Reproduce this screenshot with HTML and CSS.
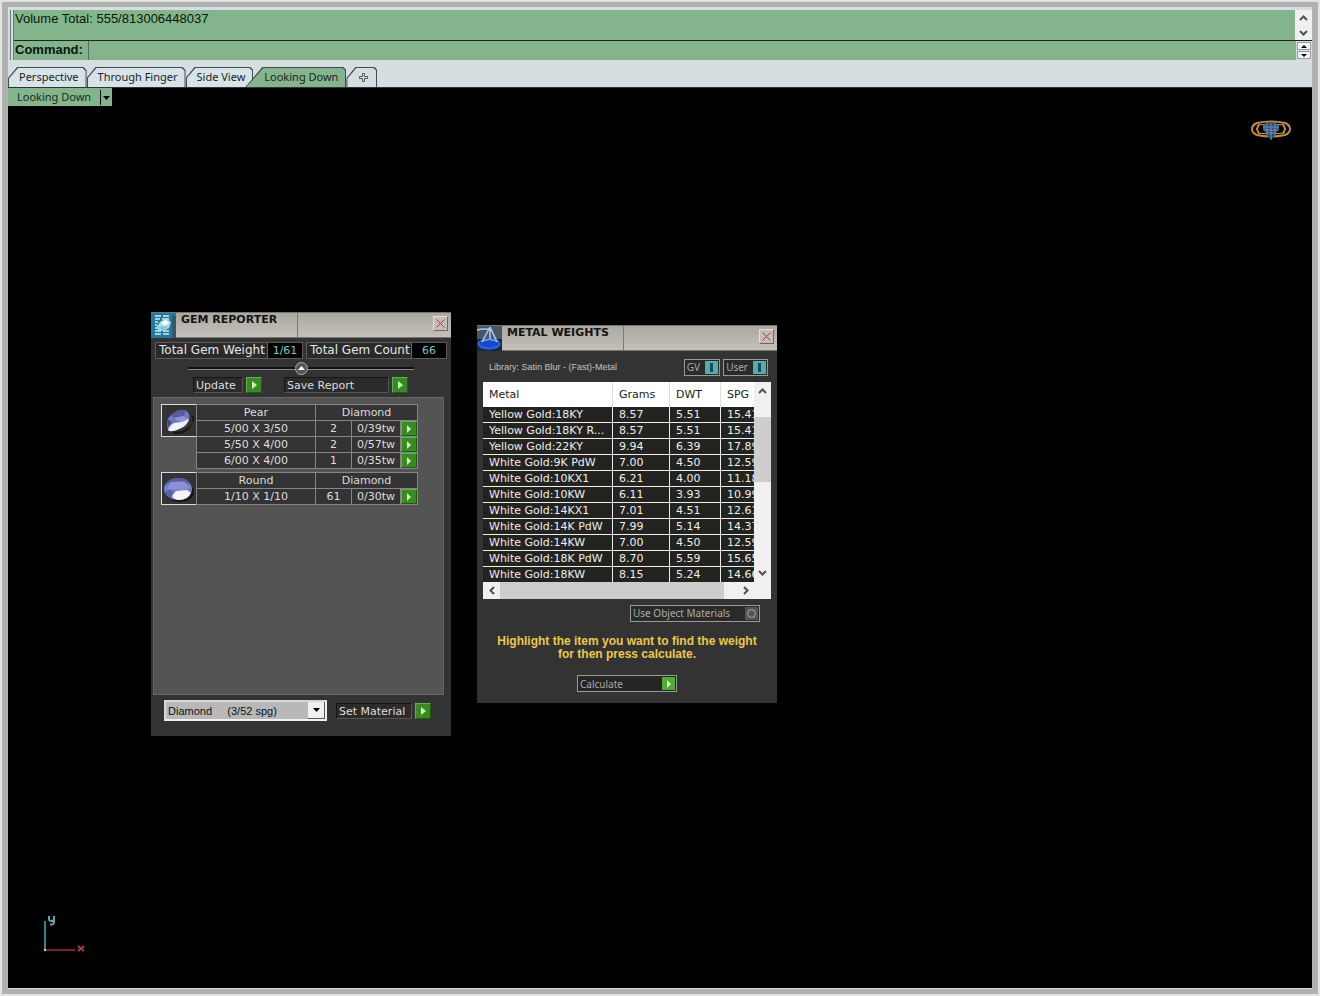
FILE: index.html
```html
<!DOCTYPE html>
<html lang="en">
<head>
    <meta charset="utf-8">
    <title>Looking Down</title>
    <link rel="stylesheet" href="styles.css">
</head>
<body>
    <div class="frame">
        <div class="console">
            <div class="grip"></div>
            <div class="console-main">
                <div class="history">
                    <div class="history-text">Volume Total: 555/813006448037</div>
                    <div class="history-scroll">
                        <button class="chev" aria-label="Scroll up"><svg width="9" height="6"><path d="M1 5L4.500 1.500L8 5"/></svg></button>
                        <button class="chev" aria-label="Scroll down"><svg width="9" height="6"><path d="M1 1L4.500 4.500L8 1"/></svg></button>
                    </div>
                </div>
                <div class="prompt">
                    <label for="command">Command:</label>
                    <input type="text" id="command">
                    <div class="spin">
                        <button aria-label="Previous"><svg width="6" height="3"><path d="M0 3L3 0L6 3Z"/></svg></button>
                        <button aria-label="Next"><svg width="6" height="3"><path d="M0 0L3 3L6 0Z"/></svg></button>
                    </div>
                </div>
            </div>
        </div>

        <div class="tabs">
            <button class="tab">Perspective</button>
            <button class="tab">Through Finger</button>
            <button class="tab">Side View</button>
            <button class="tab active">Looking Down</button>
            <button class="tab add" aria-label="New view"><svg width="9" height="9"><path d="M3.500 .5h2v3h3v2h-3v3h-2v-3h-3v-2h3z"/></svg></button>
        </div>

        <div class="viewport">
            <button class="view-name">Looking Down <span class="view-arrow"><svg width="7" height="4"><path d="M0 0h7L3.500 4z"/></svg></span></button>

            <svg class="ring" width="40" height="22" viewBox="0 0 40 22">
                <path d="M6 3Q20 0 34 3Q39 5 39 9T34 15Q20 18 6 15Q1 13 1 9T6 3Z" fill="none" stroke="#c08d42" stroke-width="2"/>
                <path d="M7 5Q20 3 33 5Q36 9 33 13Q20 15 7 13Q4 9 7 5Z" fill="none" stroke="#d8a14a"/>
                <path d="M8 4q-3 5 0 10M32 4q3 5 0 10" stroke="#e0ac5a" fill="none"/>
                <path d="M12 7L15 3H25L28 7L25 14L20 20L15 14Z" fill="#2c5078"/>
                <path d="M12 7h16M13 10h14M15 13h10M16 3v12M20 3v17M24 3v12M13 4v7M27 4v7" stroke="#6e8db0" fill="none"/>
            </svg>

            <svg class="axes" width="42" height="40" viewBox="0 0 42 40">
                <path d="M1 8V37" stroke="#2f8290" stroke-width="2"/>
                <path d="M2 37H31" stroke="#7a2020" stroke-width="2"/>
                <path d="M0 36h2v2h-2z" fill="#ccc"/>
                <path d="M5 3v3q0 2 2.500 2t2.500-2V3M10 6v3q0 3-4 2.500" fill="none" stroke="#63a5a8" stroke-width="2"/>
                <path d="M34 33l6 5M40 33l-6 5" stroke="#b03a3a" stroke-width="2"/>
            </svg>

            <section class="window gem">
                <header class="titlebar">
                    <svg class="logo" width="25" height="25" viewBox="0 0 25 25">
                        <rect width="25" height="25" fill="#23799a"/>
                        <path d="M21 3h4v22h-4z" fill="#31586b"/>
                        <path d="M4 3h6M12 3h6M4 6h5M11 6h7M4 9h3M4 12h2M4 15h3M4 18h6M12 18h6M4 21h6M12 21h6" stroke="#c9eef5" stroke-width="1.500"/>
                        <path d="M6 13l4-5 6-2 4 3-2 6-6 3-5-1z" fill="#a9dbe8"/>
                        <path d="M10 9l5-2 3 3-5 3z" fill="#fff"/>
                        <path d="M7 14l6-1 4 1-5 3z" fill="#7fc3d6"/>
                    </svg>
                    <h1>GEM REPORTER</h1>
                    <button class="close" aria-label="Close"><svg width="9" height="9"><path d="M.5 .5l8 8M8.500 .5l-8 8"/></svg></button>
                </header>

                <div class="totals">
                    <div class="total weight"><span>Total Gem Weight</span><output>1/61</output></div>
                    <div class="total count"><span>Total Gem Count</span><output>66</output></div>
                </div>
                <div class="fold"><button aria-label="Collapse"><svg width="7" height="4"><path d="M0 4L3.500 0L7 4Z"/></svg></button></div>

                <div class="actions">
                    <div class="action update"><label for="update">Update</label><button class="go" id="update"><svg width="5" height="8"><path d="M0 0l5 4l-5 4z"/></svg></button></div>
                    <div class="action save"><label for="save">Save Report</label><button class="go" id="save"><svg width="5" height="8"><path d="M0 0l5 4l-5 4z"/></svg></button></div>
                </div>

                <div class="stones">
                    <div class="stone">
                        <div class="thumb">
                            <svg width="34" height="31" viewBox="0 0 34 31">
                                <path d="M8 26q12 3 20-5t1-12q4 9-2 15t-14 5z" fill="#161616"/>
                                <path d="M6 25Q3 15 9 10T23 5Q29 8 27 15T17 24Q9 28 6 25Z" fill="#7179c2"/>
                                <path d="M9 10L16 5L24 5L22 11L12 13Z" fill="#565c9a"/>
                                <path d="M12 13l9-2l6 3l-7 4z" fill="#8c95dc"/>
                                <path d="M5 14l5 3l-4 5z" fill="#424780"/>
                                <path d="M6 25Q8 20 12 18L20 17L27 14Q25 21 17 24Q9 28 6 25Z" fill="#f1f3ff"/>
                            </svg>
                        </div>
                        <table>
                            <colgroup><col class="c-size"><col class="c-qty"><col class="c-wt"><col class="c-go"></colgroup>
                            <tr><th>Pear</th><th colspan="3">Diamond</th></tr>
                            <tr><td>5/00 X 3/50</td><td>2</td><td>0/39tw</td><td><button class="go" aria-label="Select"><svg width="4" height="8"><path d="M0 0l4 4l-4 4z"/></svg></button></td></tr>
                            <tr><td>5/50 X 4/00</td><td>2</td><td>0/57tw</td><td><button class="go" aria-label="Select"><svg width="4" height="8"><path d="M0 0l4 4l-4 4z"/></svg></button></td></tr>
                            <tr><td>6/00 X 4/00</td><td>1</td><td>0/35tw</td><td><button class="go" aria-label="Select"><svg width="4" height="8"><path d="M0 0l4 4l-4 4z"/></svg></button></td></tr>
                        </table>
                    </div>
                    <div class="stone">
                        <div class="thumb">
                            <svg width="34" height="31" viewBox="0 0 34 31">
                                <ellipse cx="18" cy="19" rx="14" ry="10" fill="#171717"/>
                                <ellipse cx="16" cy="16" rx="14" ry="11" fill="#737cc6"/>
                                <path d="M3 12Q8 5 16 5T28 12L22 8L9 9Z" fill="#565c9a"/>
                                <path d="M9 9h13l6 6l-9 2l-14-1z" fill="#8992d8"/>
                                <path d="M3 19l5-3l3 3l-2 6q-5-2-6-6z" fill="#5a61a8"/>
                                <path d="M10 23L14 18L25 17L29 20Q26 27 17 27Q12 27 10 23Z" fill="#f4f5ff"/>
                            </svg>
                        </div>
                        <table>
                            <colgroup><col class="c-size"><col class="c-qty"><col class="c-wt"><col class="c-go"></colgroup>
                            <tr><th>Round</th><th colspan="3">Diamond</th></tr>
                            <tr><td>1/10 X 1/10</td><td>61</td><td>0/30tw</td><td><button class="go" aria-label="Select"><svg width="4" height="8"><path d="M0 0l4 4l-4 4z"/></svg></button></td></tr>
                        </table>
                    </div>
                </div>

                <div class="material">
                    <div class="combo">
                        <select aria-label="Material"><option>Diamond&nbsp;&nbsp;&nbsp;&nbsp;&nbsp;(3/52 spg)</option></select>
                        <span class="combo-arrow"><svg width="7" height="4"><path d="M0 0h7L3.500 4z"/></svg></span>
                    </div>
                    <div class="action set"><label for="set">Set Material</label><button class="go" id="set"><svg width="5" height="8"><path d="M0 0l5 4l-5 4z"/></svg></button></div>
                </div>
            </section>

            <section class="window metal">
                <header class="titlebar">
                    <svg class="logo" width="25" height="25" viewBox="0 0 25 25">
                        <rect width="25" height="25" fill="#4b5565"/>
                        <path d="M0 13h25v12H0z" fill="#1a2847"/>
                        <ellipse cx="12" cy="18" rx="11" ry="5" fill="#1748c8" stroke="#3f86f5"/>
                        <path d="M2 18q10 6 20 0q-2 5-10 5t-10-5z" fill="#1d5cf0"/>
                        <path d="M0 4q7-2 14 0M13 1L5 16M13 1L20 16M13 1V13" stroke="#a9cdf7" fill="none" stroke-width="1.500"/>
                        <path d="M6 15q6-3 13 0" stroke="#7fb4ff" fill="none"/>
                    </svg>
                    <h1>METAL WEIGHTS</h1>
                    <button class="close" aria-label="Close"><svg width="9" height="9"><path d="M.5 .5l8 8M8.500 .5l-8 8"/></svg></button>
                </header>

                <div class="library">
                    <span>Library: Satin Blur - (Fast)-Metal</span>
                    <label class="switch">GV<input type="checkbox" checked></label>
                    <label class="switch">User<input type="checkbox" checked></label>
                </div>

                <div class="list">
                    <div class="rows">
                        <table>
                            <colgroup><col class="m-name"><col class="m-g"><col class="m-dwt"><col class="m-spg"></colgroup>
                            <thead><tr><th>Metal</th><th>Grams</th><th>DWT</th><th>SPG</th></tr></thead>
                            <tbody>
                                <tr><td>Yellow Gold:18KY</td><td>8.57</td><td>5.51</td><td>15.41</td></tr>
                                <tr><td>Yellow Gold:18KY R...</td><td>8.57</td><td>5.51</td><td>15.41</td></tr>
                                <tr><td>Yellow Gold:22KY</td><td>9.94</td><td>6.39</td><td>17.89</td></tr>
                                <tr><td>White Gold:9K PdW</td><td>7.00</td><td>4.50</td><td>12.59</td></tr>
                                <tr><td>White Gold:10KX1</td><td>6.21</td><td>4.00</td><td>11.18</td></tr>
                                <tr><td>White Gold:10KW</td><td>6.11</td><td>3.93</td><td>10.99</td></tr>
                                <tr><td>White Gold:14KX1</td><td>7.01</td><td>4.51</td><td>12.61</td></tr>
                                <tr><td>White Gold:14K PdW</td><td>7.99</td><td>5.14</td><td>14.37</td></tr>
                                <tr><td>White Gold:14KW</td><td>7.00</td><td>4.50</td><td>12.59</td></tr>
                                <tr><td>White Gold:18K PdW</td><td>8.70</td><td>5.59</td><td>15.65</td></tr>
                                <tr><td>White Gold:18KW</td><td>8.15</td><td>5.24</td><td>14.66</td></tr>
                            </tbody>
                        </table>
                    </div>
                    <div class="vbar">
                        <button class="chev" aria-label="Scroll up"><svg width="9" height="6"><path d="M1 5L4.500 1.500L8 5"/></svg></button>
                        <div class="vthumb"></div>
                        <button class="chev" aria-label="Scroll down"><svg width="9" height="6"><path d="M1 1L4.500 4.500L8 1"/></svg></button>
                    </div>
                    <div class="hbar">
                        <button class="chev" aria-label="Scroll left"><svg width="6" height="9"><path d="M5 1L1.500 4.500L5 8"/></svg></button>
                        <div class="hthumb"></div>
                        <button class="chev" aria-label="Scroll right"><svg width="6" height="9"><path d="M1 1L4.500 4.500L1 8"/></svg></button>
                    </div>
                </div>

                <label class="switch use-object">Use Object Materials<input type="checkbox"></label>
                <p class="hint">Highlight the item you want to find the weight<br>for then press calculate.</p>
                <button class="calculate">Calculate<span><svg width="4" height="8"><path d="M0 0l4 4l-4 4z"/></svg></span></button>
            </section>
        </div>
    </div>
</body>
</html>
```
FILE: styles.css
```css
* {
    box-sizing: border-box;
}
body {
    margin: 0;
    height: 100vh;
    font-family: "DejaVu Sans", Verdana, sans-serif;
    font-size: 11px;
}
button {
    padding: 0;
    margin: 0;
    border: none;
    font: inherit;
    color: inherit;
}
svg {
    display: block;
}
.frame {
    height: 100vh;
    display: flex;
    flex-direction: column;
    border: 7px solid #b0b0b0;
    border-left-width: 8px;
    border-right-width: 8px;
    background: #d6dee1;
    outline: 2px solid #e2e2e2;
    outline-offset: -2px;
}

/* command area */
.console {
    display: flex;
    margin-top: 3px;
    padding-left: 2px;
}
.grip {
    width: 4px;
    border: solid #6f7779;
    border-width: 0 1px;
}
.console-main {
    flex: 1;
    font-family: "Liberation Sans", Arial, sans-serif;
    font-size: 13px;
    color: #06180b;
}
.history {
    display: flex;
    height: 31px;
    border-bottom: 1px solid #222;
}
.history-text {
    flex: 1;
    background: #84b48c;
    padding-left: 1px;
    line-height: 17px;
}
.history-scroll {
    width: 17px;
    display: flex;
    flex-direction: column;
    background: #f0f0f0;
}
.chev {
    flex: none;
    background: #f0f0f0;
    display: flex;
    align-items: center;
    justify-content: center;
}
.chev path {
    fill: none;
    stroke: #505050;
    stroke-width: 2;
}
.history-scroll .chev {
    flex: 1;
}
.prompt {
    display: flex;
    height: 19px;
    background: #84b48c;
}
.prompt label {
    font-weight: bold;
    line-height: 17px;
    padding-left: 1px;
    margin-right: 5px;
}
.prompt input {
    flex: 1;
    border: none;
    border-left: 1px solid #5c6f5f;
    background: transparent;
    padding: 0 4px;
    outline: none;
}
.spin {
    width: 16px;
    background: #d6dee1;
    display: flex;
    flex-direction: column;
    gap: 1px;
    padding: 1px;
}
.spin button {
    flex: 1;
    background: #f6f6f6;
    border: 1px solid #9a9a9a;
    display: flex;
    align-items: center;
    justify-content: center;
}

/* view tabs */
.tabs {
    display: flex;
    margin-top: 7px;
    height: 21px;
    font-family: "Noto Sans", "Open Sans", sans-serif;
    border-bottom: 1px solid #333;
}
.tab {
    position: relative;
    z-index: 0;
    background: none;
    padding: 0 8px 2px 11px;
    color: #222;
    font-size: 11px;
    line-height: 17px;
}
.tab::before,
.tab::after {
    content: "";
    position: absolute;
    z-index: -1;
    inset: 0;
    background: #444c4e;
    clip-path: polygon(0 100%, 0 55%, 9px 0, calc(100% - 3px) 0, 100% 3px, 100% 100%);
}
.tab::after {
    inset: 1px 1px 0 1px;
    background: #d6e4e9;
}
.tab.active::before,
.tab.active::after {
    left: -8px;
    clip-path: polygon(0 100%, 17px 0, calc(100% - 3px) 0, 100% 3px, 100% 100%);
}
.tab.active::after {
    left: -7px;
    background: #84b48c;
}
.tab.add {
    width: 31px;
    padding: 0 0 0 13px;
}
.tab.add::after {
    background: #d6dee1;
}
.tab.add path {
    fill: none;
    stroke: #555;
}

/* drawing area */
.viewport {
    position: relative;
    flex: 1;
    background: #000;
    border: solid #dadada;
    border-width: 0 0 1px;
}
.view-name {
    display: flex;
    height: 18px;
    padding-left: 9px;
    background: #84b48c;
    color: #13301a;
    font-family: "Noto Sans", "Open Sans", sans-serif;
    font-size: 11px;
    line-height: 18px;
}
.view-arrow {
    margin: 2px 0 1px 9px;
    padding: 0 2px;
    border-left: 1px solid #111;
    display: flex;
    align-items: center;
}
.ring {
    position: absolute;
    top: 32px;
    right: 21px;
}
.axes {
    position: absolute;
    left: 36px;
    bottom: 35px;
}

/* floating windows */
.window {
    position: absolute;
    width: 300px;
    background: #333;
    color: #ddd;
}
.gem {
    left: 143px;
    top: 224px;
    padding-bottom: 15px;
}
.metal {
    left: 469px;
    top: 237px;
    padding-bottom: 11px;
}
.titlebar {
    display: flex;
    height: 26px;
    border-bottom: 1px solid #77756f;
    border-top: 1px solid #77756f;
    background: linear-gradient(#aaa8a1, #c3c1b9);
}
.titlebar h1 {
    margin: 0;
    width: 122px;
    padding-left: 5px;
    border-right: 1px solid #7c7a74;
    color: #141414;
    font-size: 11px;
    line-height: 13px;
}
.close {
    width: 15px;
    height: 15px;
    margin: 3px 3px 0 auto;
    background: #c6beb6;
    border: 1px solid #6d6861;
    border-top-color: #e5e0d9;
    border-left-color: #e5e0d9;
    display: flex;
    align-items: center;
    justify-content: center;
}
.close path {
    stroke: #a04040;
}
.totals {
    display: flex;
    gap: 3px;
    padding: 4px 4px 0;
}
.total {
    display: flex;
    height: 17px;
    border: 1px solid #5c5c5c;
    background: #2a2a2a;
    line-height: 15px;
    white-space: nowrap;
    color: #e6e6e6;
}
.total span {
    flex: 1;
    padding-left: 3px;
    font-size: 12px;
}
.total output {
    width: 35px;
    background: #000;
    border-left: 1px solid #666;
    color: #7cc8c8;
    text-align: center;
}
.weight {
    width: 148px;
}
.count {
    width: 141px;
}
.fold {
    position: relative;
    height: 18px;
    margin: 0 37px;
    display: flex;
    justify-content: center;
    align-items: center;
}
.fold::before {
    content: "";
    position: absolute;
    left: 0;
    right: 0;
    top: 8px;
    height: 2px;
    background: #111;
    border-bottom: 1px solid #888;
}
.fold button {
    position: relative;
    width: 13px;
    height: 13px;
    border: 1px solid #aaa;
    border-radius: 50%;
    background: #5a5555;
    display: flex;
    align-items: center;
    justify-content: center;
}
.fold path {
    fill: #fff;
}
.actions {
    display: flex;
    gap: 22px;
    padding-left: 42px;
}
.action {
    display: flex;
    gap: 3px;
}
.action label {
    height: 16px;
    line-height: 15px;
    padding-left: 2px;
    white-space: nowrap;
    background: #2b2b2b;
    border: 1px solid #555;
    border-top-color: #151515;
    border-left-color: #151515;
}
.update label {
    width: 50px;
}
.save label {
    width: 105px;
}
.set label {
    width: 76px;
}
.go {
    width: 16px;
    height: 16px;
    background: #398a22;
    border: 1px solid #1f5c12;
    border-top-color: #66ac50;
    border-left-color: #66ac50;
    display: flex;
    align-items: center;
    justify-content: center;
}
.go path,
.calculate path {
    fill: #c9f7b4;
}
.stones {
    height: 298px;
    margin: 4px 7px 0 2px;
    padding: 6px 7px;
    background: #545454;
    border: 1px solid #666;
    display: flex;
    flex-direction: column;
    gap: 3px;
}
.stone {
    display: flex;
    align-items: flex-start;
}
.thumb {
    width: 36px;
    height: 33px;
    border: 1px solid #ddd;
    background: #333;
    flex: none;
}
.stone table {
    width: 222px;
    margin-left: -1px;
    table-layout: fixed;
    border-collapse: collapse;
    background: #333;
}
.stone th,
.stone td {
    padding: 0;
    height: 16px;
    line-height: 15px;
    border: 1px solid #858585;
    font-weight: normal;
    text-align: center;
}
.stone .go {
    width: 16px;
    height: 15px;
}
.c-size { width: 119px; }
.c-qty { width: 36px; }
.c-wt { width: 49px; }
.c-go { width: 17px; }
.material {
    display: flex;
    gap: 9px;
    align-items: center;
    padding: 5px 0 0 13px;
}
.combo {
    position: relative;
    width: 163px;
    height: 21px;
}
.combo select {
    appearance: none;
    width: 100%;
    height: 100%;
    padding: 0 0 0 2px;
    background: #b8b8b8;
    border: 2px solid #f0f0f0;
    border-top-color: #d8d8d8;
    border-left-color: #d8d8d8;
    border-radius: 0;
    color: #111;
    font-family: "Liberation Sans", Arial, sans-serif;
    font-size: 11px;
}
.combo-arrow {
    position: absolute;
    top: 2px;
    right: 2px;
    width: 17px;
    height: 17px;
    background: #f0f0f0;
    border-right: 1px solid #555;
    border-bottom: 1px solid #555;
    display: flex;
    align-items: center;
    justify-content: center;
    pointer-events: none;
}

/* metal weights */
.library {
    display: flex;
    gap: 3px;
    align-items: center;
    padding: 8px 9px 6px 12px;
}
.library span {
    flex: 1;
    font-family: "Liberation Sans", Arial, sans-serif;
    font-size: 9px;
    line-height: 16px;
    align-self: flex-start;
    color: #c4c4c4;
}
.switch {
    display: flex;
    justify-content: space-between;
    align-items: center;
    gap: 5px;
    height: 17px;
    padding: 0 1px 0 2px;
    border: 1px solid #999;
    background: #2a2a28;
    color: #aaa;
    font-family: "Noto Sans", "Open Sans", sans-serif;
    font-size: 10px;
    line-height: 15px;
}
.switch input {
    appearance: none;
    margin: 0;
    width: 13px;
    height: 13px;
    background: #555;
    display: grid;
    place-items: center;
}
.switch input::before {
    content: "";
    width: 7px;
    height: 7px;
    border: 1px solid #aaa;
    border-radius: 50%;
}
.switch input:checked {
    background: #55adb0;
}
.switch input:checked::before {
    width: 3px;
    height: 9px;
    border: none;
    border-radius: 0;
    background: #164f59;
}
.list {
    display: grid;
    grid-template-columns: 1fr 17px;
    grid-template-rows: 200px 17px;
    margin: 0 6px;
    background: #f0f0f0;
}
.rows {
    overflow: hidden;
    background: #fff;
}
.list table {
    width: 288px;
    table-layout: fixed;
    border-collapse: separate;
    border-spacing: 0;
}
.list th {
    height: 25px;
    padding: 0 0 0 6px;
    font-weight: normal;
    text-align: left;
    color: #222;
    border-right: 1px solid #ddd;
}
.list td {
    height: 16px;
    padding: 0 0 0 6px;
    line-height: 15px;
    white-space: nowrap;
    color: #eee;
    background: #232320;
    border-right: 1px solid #eee;
    border-bottom: 1px solid #eee;
}
.m-name { width: 130px; }
.m-g { width: 57px; }
.m-dwt { width: 51px; }
.vbar {
    display: flex;
    flex-direction: column;
    justify-content: space-between;
}
.vbar .chev {
    height: 18px;
}
.vthumb {
    height: 65px;
    margin: 17px 0 auto;
    background: #cdcdcd;
}
.hbar {
    display: flex;
}
.hbar .chev {
    width: 17px;
}
.hthumb {
    flex: 1;
    margin-right: 13px;
    background: #cdcdcd;
}
.use-object {
    width: 130px;
    margin: 6px 17px 0 auto;
}
.hint {
    margin: 13px 0 14px;
    text-align: center;
    color: #ecc94a;
    font-family: "Liberation Sans", Arial, sans-serif;
    font-size: 12px;
    font-weight: bold;
    line-height: 13px;
}
.calculate {
    width: 100px;
    height: 17px;
    margin: 0 auto;
    padding: 0 1px 0 2px;
    display: flex;
    justify-content: space-between;
    align-items: center;
    background: #252523;
    border: 1px solid #999;
    color: #aaa;
    font-family: "Noto Sans", "Open Sans", sans-serif;
    font-size: 10px;
}
.calculate span {
    width: 13px;
    height: 13px;
    background: #53a83c;
    display: flex;
    align-items: center;
    justify-content: center;
}
```
